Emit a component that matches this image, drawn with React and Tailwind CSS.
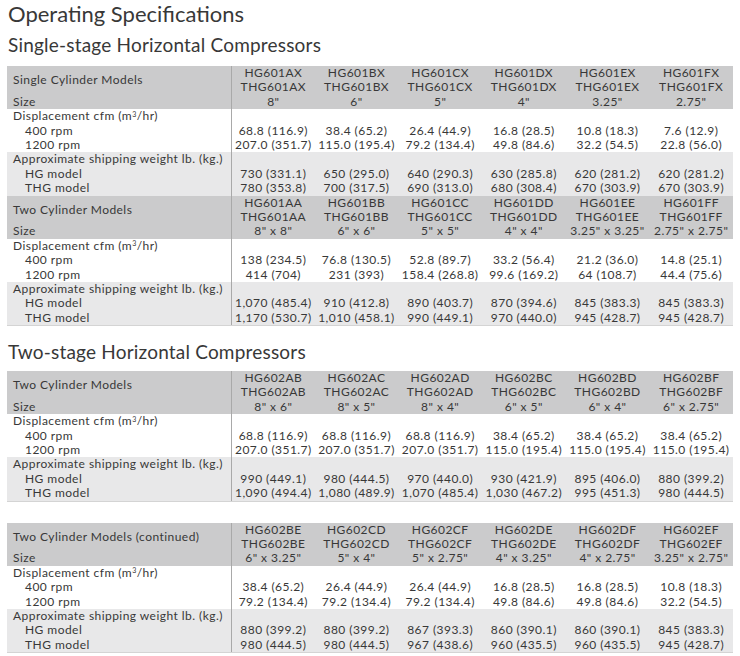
const singleStage = [
  {
    label: 'Single Cylinder Models',
    models: [
      ['HG601AX', 'THG601AX', '8"'],
      ['HG601BX', 'THG601BX', '6"'],
      ['HG601CX', 'THG601CX', '5"'],
      ['HG601DX', 'THG601DX', '4"'],
      ['HG601EX', 'THG601EX', '3.25"'],
      ['HG601FX', 'THG601FX', '2.75"'],
    ],
    rpm400: ['68.8 (116.9)', '38.4 (65.2)', '26.4 (44.9)', '16.8 (28.5)', '10.8 (18.3)', '7.6 (12.9)'],
    rpm1200: ['207.0 (351.7)', '115.0 (195.4)', '79.2 (134.4)', '49.8 (84.6)', '32.2 (54.5)', '22.8 (56.0)'],
    hg: ['730 (331.1)', '650 (295.0)', '640 (290.3)', '630 (285.8)', '620 (281.2)', '620 (281.2)'],
    thg: ['780 (353.8)', '700 (317.5)', '690 (313.0)', '680 (308.4)', '670 (303.9)', '670 (303.9)'],
  },
  {
    label: 'Two Cylinder Models',
    models: [
      ['HG601AA', 'THG601AA', '8" x 8"'],
      ['HG601BB', 'THG601BB', '6" x 6"'],
      ['HG601CC', 'THG601CC', '5" x 5"'],
      ['HG601DD', 'THG601DD', '4" x 4"'],
      ['HG601EE', 'THG601EE', '3.25" x 3.25"'],
      ['HG601FF', 'THG601FF', '2.75" x 2.75"'],
    ],
    rpm400: ['138 (234.5)', '76.8 (130.5)', '52.8 (89.7)', '33.2 (56.4)', '21.2 (36.0)', '14.8 (25.1)'],
    rpm1200: ['414 (704)', '231 (393)', '158.4 (268.8)', '99.6 (169.2)', '64 (108.7)', '44.4 (75.6)'],
    hg: ['1,070 (485.4)', '910 (412.8)', '890 (403.7)', '870 (394.6)', '845 (383.3)', '845 (383.3)'],
    thg: ['1,170 (530.7)', '1,010 (458.1)', '990 (449.1)', '970 (440.0)', '945 (428.7)', '945 (428.7)'],
  },
]

const twoStage = [
  {
    label: 'Two Cylinder Models',
    models: [
      ['HG602AB', 'THG602AB', '8" x 6"'],
      ['HG602AC', 'THG602AC', '8" x 5"'],
      ['HG602AD', 'THG602AD', '8" x 4"'],
      ['HG602BC', 'THG602BC', '6" x 5"'],
      ['HG602BD', 'THG602BD', '6" x 4"'],
      ['HG602BF', 'THG602BF', '6" x 2.75"'],
    ],
    rpm400: ['68.8 (116.9)', '68.8 (116.9)', '68.8 (116.9)', '38.4 (65.2)', '38.4 (65.2)', '38.4 (65.2)'],
    rpm1200: ['207.0 (351.7)', '207.0 (351.7)', '207.0 (351.7)', '115.0 (195.4)', '115.0 (195.4)', '115.0 (195.4)'],
    hg: ['990 (449.1)', '980 (444.5)', '970 (440.0)', '930 (421.9)', '895 (406.0)', '880 (399.2)'],
    thg: ['1,090 (494.4)', '1,080 (489.9)', '1,070 (485.4)', '1,030 (467.2)', '995 (451.3)', '980 (444.5)'],
  },
]

const twoStageContinued = [
  {
    label: 'Two Cylinder Models (continued)',
    models: [
      ['HG602BE', 'THG602BE', '6" x 3.25"'],
      ['HG602CD', 'THG602CD', '5" x 4"'],
      ['HG602CF', 'THG602CF', '5" x 2.75"'],
      ['HG602DE', 'THG602DE', '4" x 3.25"'],
      ['HG602DF', 'THG602DF', '4" x 2.75"'],
      ['HG602EF', 'THG602EF', '3.25" x 2.75"'],
    ],
    rpm400: ['38.4 (65.2)', '26.4 (44.9)', '26.4 (44.9)', '16.8 (28.5)', '16.8 (28.5)', '10.8 (18.3)'],
    rpm1200: ['79.2 (134.4)', '79.2 (134.4)', '79.2 (134.4)', '49.8 (84.6)', '49.8 (84.6)', '32.2 (54.5)'],
    hg: ['880 (399.2)', '880 (399.2)', '867 (393.3)', '860 (390.1)', '860 (390.1)', '845 (383.3)'],
    thg: ['980 (444.5)', '980 (444.5)', '967 (438.6)', '960 (435.5)', '960 (435.5)', '945 (428.7)'],
  },
]

function Section({ bg, left, cols }) {
  return (
    <div className={`grid grid-cols-[224px_repeat(6,1fr)] ${bg}`}>
      <div className="pl-[6px]">{left}</div>
      {cols.map((lines, i) => (
        <div key={i} className={`text-center ${i === 0 ? 'border-l border-[#a9a9a9]' : ''}`}>
          {lines.map((line, j) => (
            <div key={j} className="h-[14.4px] whitespace-nowrap">{line}</div>
          ))}
        </div>
      ))}
    </div>
  )
}

function Group({ group }) {
  return (
    <>
      <Section
        bg="bg-[#cbcbcc]"
        left={
          <div className="flex h-[43.2px] flex-col">
            <div className="flex h-[28.8px] items-center">{group.label}</div>
            <div className="h-[14.4px]">Size</div>
          </div>
        }
        cols={group.models}
      />
      <Section
        bg="bg-white"
        left={
          <>
            <div className="h-[14.4px]">Displacement cfm (m<sup className="text-[7px]">3</sup>/hr)</div>
            <div className="h-[14.4px] pl-[12px]">400 rpm</div>
            <div className="h-[14.4px] pl-[12px]">1200 rpm</div>
          </>
        }
        cols={group.rpm400.map((v, i) => ['', v, group.rpm1200[i]])}
      />
      <Section
        bg="bg-[#e8e8e9]"
        left={
          <>
            <div className="h-[14.4px] whitespace-nowrap">Approximate shipping weight lb. (kg.)</div>
            <div className="h-[14.4px] pl-[12px]">HG model</div>
            <div className="h-[14.4px] pl-[12px]">THG model</div>
          </>
        }
        cols={group.hg.map((v, i) => ['', v, group.thg[i]])}
      />
    </>
  )
}

function SpecTable({ groups, className = '' }) {
  return (
    <div className={`mx-[7px] border-b border-[#d4d4d4] text-[12px] leading-[14.4px] tracking-[0.45px] ${className}`}>
      {groups.map((g) => (
        <Group key={g.label} group={g} />
      ))}
    </div>
  )
}

export default function App() {
  return (
    <div className="min-h-[656px] w-[740px] bg-white pt-px text-[#383838] [font-family:Lato,'Open_Sans',sans-serif]">
      <h1 className="ml-[8px] text-[22px] leading-[26px]">Operating Specifications</h1>
      <h2 className="ml-[8px] mt-[6px] text-[19px] leading-[24px] tracking-[0.2px]">Single-stage Horizontal Compressors</h2>
      <SpecTable groups={singleStage} className="mt-[9px]" />
      <h2 className="ml-[8px] mt-[14px] text-[19px] leading-[24px] tracking-[0.2px]">Two-stage Horizontal Compressors</h2>
      <SpecTable groups={twoStage} className="mt-[7px]" />
      <SpecTable groups={twoStageContinued} className="mt-[21px]" />
    </div>
  )
}
